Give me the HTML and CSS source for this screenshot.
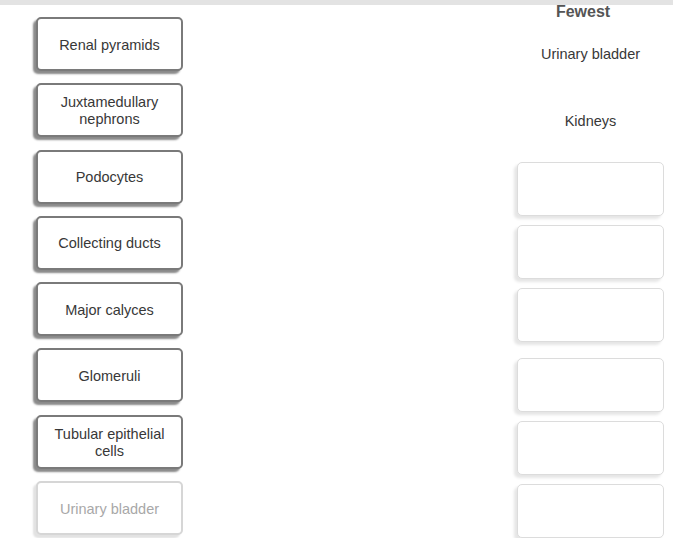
FILE: index.html
```html
<!DOCTYPE html>
<html>
<head>
<meta charset="utf-8">
<link rel="stylesheet" href="styles.css">
</head>
<body>
<div class="topbar"></div>
<div class="main">
  <div class="left">
    <div class="card">Renal pyramids</div>
    <div class="card">Juxtamedullary<br>nephrons</div>
    <div class="card">Podocytes</div>
    <div class="card">Collecting ducts</div>
    <div class="card">Major calyces</div>
    <div class="card">Glomeruli</div>
    <div class="card">Tubular epithelial<br>cells</div>
    <div class="card faded">Urinary bladder</div>
  </div>
  <div class="right">
    <div class="heading">Fewest</div>
    <div class="placed p1">Urinary bladder</div>
    <div class="placed p2">Kidneys</div>
    <div class="slot s1"></div>
    <div class="slot s2"></div>
    <div class="slot s3"></div>
    <div class="slot s4"></div>
    <div class="slot s5"></div>
    <div class="slot s6"></div>
  </div>
</div>
</body>
</html>
```
FILE: styles.css
```css
html, body {
  margin: 0;
  padding: 0;
  background: #fff;
  font-family: "Liberation Sans", Arial, sans-serif;
  color: #333;
  overflow: hidden;
}
.topbar {
  height: 5px;
  background: #e3e3e3;
}
.main {
  display: flex;
  align-items: flex-start;
  height: 533px;
}
.left {
  margin-left: 36px;
  margin-top: 12px;
  display: flex;
  flex-direction: column;
  gap: 12.3px;
  width: 147px;
}
.card {
  box-sizing: border-box;
  height: 54px;
  padding-top: 2px;
  border: 2px solid #7a7a7a;
  border-radius: 5px;
  box-shadow: -3px 3px 2px #8a8a8a;
  display: flex;
  align-items: center;
  justify-content: center;
  text-align: center;
  font-size: 14.5px;
  line-height: 17px;
  color: #383838;
  background: #fff;
}
.card.faded {
  border-color: #d6d6d6;
  box-shadow: -3px 3px 2px #e2e2e2;
  color: #a8a8a8;
}
.right {
  margin-left: auto;
  margin-right: 9px;
  width: 147px;
  display: flex;
  flex-direction: column;
}
.heading {
  height: 14px;
  line-height: 14px;
  font-size: 16px;
  font-weight: bold;
  color: #555;
  text-align: center;
  padding-right: 15px;
}
.placed {
  height: 54px;
  display: flex;
  align-items: center;
  justify-content: center;
  font-size: 14.5px;
  color: #383838;
}
.p1 { margin-top: 8px; }
.p2 { margin-top: 13px; }
.slot {
  box-sizing: border-box;
  height: 54px;
  border: 1px solid #dcdcdc;
  border-radius: 5px;
  box-shadow: -3px 3px 3px #e6e6e6;
  background: #fff;
}
.s1 { margin-top: 14px; }
.s2 { margin-top: 9px; }
.s3 { margin-top: 9px; }
.s4 { margin-top: 16px; }
.s5 { margin-top: 9px; }
.s6 { margin-top: 9px; }
```
